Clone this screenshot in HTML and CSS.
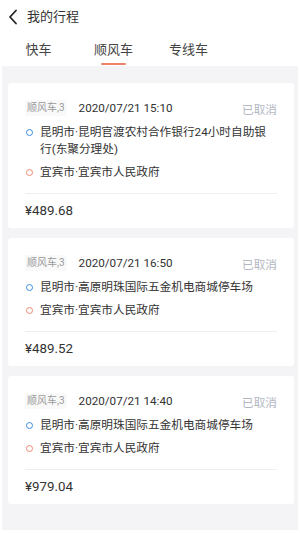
FILE: index.html
```html
<!DOCTYPE html>
<html lang="zh">
<head>
<meta charset="utf-8">
<title>我的行程</title>
<link rel="stylesheet" href="styles.css">
</head>
<body>
<div class="page">
  <header class="topbar">
    <svg class="back" width="10" height="16" viewBox="0 0 10 16"><path d="M8 1.5 L2 8 L8 14.5" fill="none" stroke="#222" stroke-width="1.8" stroke-linecap="round" stroke-linejoin="round"/></svg>
    <span class="title">我的行程</span>
  </header>
  <nav class="tabs">
    <div class="tab"><span class="tab-text">快车</span><span class="tab-line"></span></div>
    <div class="tab active"><span class="tab-text">顺风车</span><span class="tab-line"></span></div>
    <div class="tab"><span class="tab-text">专线车</span><span class="tab-line"></span></div>
  </nav>
  <main class="list">
    <section class="card">
      <div class="card-head">
        <span class="tag">顺风车,3</span>
        <span class="date">2020/07/21 15:10</span>
        <span class="status">已取消</span>
      </div>
      <div class="route">
        <div class="stop"><span class="dot dot-start"></span><span class="place">昆明市·昆明官渡农村合作银行24小时自助银行(东聚分理处)</span></div>
        <div class="stop"><span class="dot dot-end"></span><span class="place">宜宾市·宜宾市人民政府</span></div>
      </div>
      <div class="divider"></div>
      <div class="price">¥489.68</div>
    </section>
    <section class="card">
      <div class="card-head">
        <span class="tag">顺风车,3</span>
        <span class="date">2020/07/21 16:50</span>
        <span class="status">已取消</span>
      </div>
      <div class="route">
        <div class="stop"><span class="dot dot-start"></span><span class="place">昆明市·高原明珠国际五金机电商城停车场</span></div>
        <div class="stop"><span class="dot dot-end"></span><span class="place">宜宾市·宜宾市人民政府</span></div>
      </div>
      <div class="divider"></div>
      <div class="price">¥489.52</div>
    </section>
    <section class="card">
      <div class="card-head">
        <span class="tag">顺风车,3</span>
        <span class="date">2020/07/21 14:40</span>
        <span class="status">已取消</span>
      </div>
      <div class="route">
        <div class="stop"><span class="dot dot-start"></span><span class="place">昆明市·高原明珠国际五金机电商城停车场</span></div>
        <div class="stop"><span class="dot dot-end"></span><span class="place">宜宾市·宜宾市人民政府</span></div>
      </div>
      <div class="divider"></div>
      <div class="price">¥979.04</div>
    </section>
  </main>
</div>
</body>
</html>
```
FILE: styles.css
```css
* { box-sizing: border-box; }
html, body { margin: 0; padding: 0; background: #fff; }
body {
  font-family: Roboto, "Noto Sans CJK SC", "Noto Sans", sans-serif;
  color: #333;
}
.page {
  width: 300px;
  height: 533px;
  display: flex;
  flex-direction: column;
}
.topbar {
  height: 33px;
  display: flex;
  align-items: center;
  padding-left: 8px;
}
.back { display: block; margin-right: 9px; }
.title {
  font-size: 13px;
  color: #333;
  line-height: 16px;
}
.tabs {
  height: 33px;
  display: flex;
  padding-left: 1px;
}
.tab {
  width: 75px;
  display: flex;
  flex-direction: column;
  align-items: center;
  padding-top: 9px;
}
.tab-text {
  font-size: 13px;
  line-height: 16px;
  color: #444;
}
.tab-line {
  width: 25px;
  height: 2px;
  margin-top: 5px;
  border-radius: 1px;
  background: transparent;
}
.tab.active .tab-line { background: #f0826b; }
.list {
  flex: 1;
  margin: 0 2px 3px;
  background: #f4f4f6;
  padding: 17px 4px 0 6px;
  display: flex;
  flex-direction: column;
  gap: 10px;
}
.card {
  background: #fff;
  border-radius: 3px;
  padding: 17px 17px 7px;
}
.card-head {
  display: flex;
  align-items: center;
  height: 16px;
}
.tag {
  font-size: 10px;
  line-height: 16px;
  color: #9a9a9a;
  background: #f9f9fa;
  padding: 0 2px;
  border-radius: 2px;
}
.date {
  font-size: 11.67px;
  color: #333;
  margin-left: 12px;
  flex: 1;
}
.status {
  font-size: 11.67px;
  color: #b3b7c2;
}
.route {
  margin-top: 8px;
  padding-right: 11px;
  display: flex;
  flex-direction: column;
  gap: 6px;
}
.stop {
  display: flex;
  align-items: flex-start;
}
.dot {
  flex: none;
  width: 7px;
  height: 7px;
  border-radius: 50%;
  border: 1.5px solid;
  margin: 5px 7px 0 1px;
}
.dot-start { border-color: #3a8ee0; }
.dot-end { border-color: #ee8a74; }
.place {
  font-size: 11.67px;
  line-height: 17px;
  color: #333;
  line-break: anywhere;
}
.divider {
  margin-top: 12px;
  height: 1px;
  background: #eeeeef;
}
.price {
  padding-top: 7px;
  font-size: 13.33px;
  line-height: 20px;
  color: #333;
}
```
